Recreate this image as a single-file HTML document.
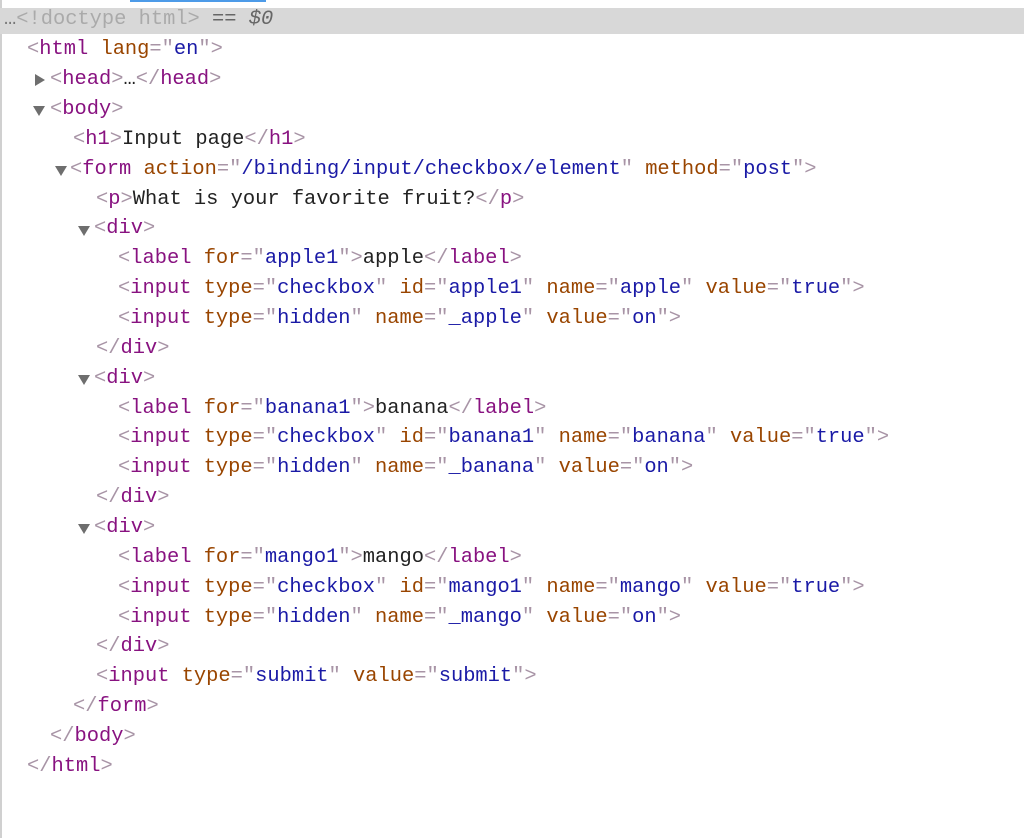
<!DOCTYPE html>
<html><head><style>
body{margin:0;width:1024px;height:838px;background:#fff;position:relative;overflow:hidden;font-family:"Liberation Mono",monospace;font-size:20.4px}
.l{position:absolute;white-space:pre;line-height:30px;height:30px;color:#222}
.t{color:#881280}.b{color:#a894a6}.a{color:#994500}.v{color:#1a1aa6}
.d,.r{position:absolute;width:0;height:0}
.d{border-left:6px solid transparent;border-right:6px solid transparent;border-top:10px solid #6e6e6e}
.r{border-top:6px solid transparent;border-bottom:6px solid transparent;border-left:10px solid #6e6e6e}
</style></head><body>
<div style="position:absolute;left:0;top:0;width:2px;height:838px;background:#d0d0d0"></div>
<div style="position:absolute;left:130px;top:0;width:136px;height:2px;background:#4d9be8"></div>
<div style="position:absolute;left:0;top:8px;width:1024px;height:26px;background:#d8d8d8"></div>
<div class="l" style="left:4px;top:5px"><span style="color:#777">…</span><span style="color:#aaa">&lt;!doctype html&gt;</span><span style="color:#666"> == <i>$0</i></span></div>

<div class="l" style="left:27px;top:35px"><span class="b">&lt;</span><span class="t">html</span> <span class="a">lang</span><span class="b">="</span><span class="v">en</span><span class="b">"&gt;</span></div>
<div class="r" style="left:35px;top:74px"></div>
<div class="l" style="left:50px;top:65px"><span class="b">&lt;</span><span class="t">head</span><span class="b">&gt;</span>…<span class="b">&lt;/</span><span class="t">head</span><span class="b">&gt;</span></div>
<div class="d" style="left:33px;top:106px"></div>
<div class="l" style="left:50px;top:95px"><span class="b">&lt;</span><span class="t">body</span><span class="b">&gt;</span></div>
<div class="l" style="left:73px;top:125px"><span class="b">&lt;</span><span class="t">h1</span><span class="b">&gt;</span>Input page<span class="b">&lt;/</span><span class="t">h1</span><span class="b">&gt;</span></div>
<div class="d" style="left:55px;top:166px"></div>
<div class="l" style="left:70px;top:155px"><span class="b">&lt;</span><span class="t">form</span> <span class="a">action</span><span class="b">="</span><span class="v">/binding/input/checkbox/element</span><span class="b">"</span> <span class="a">method</span><span class="b">="</span><span class="v">post</span><span class="b">"&gt;</span></div>
<div class="l" style="left:96px;top:185px"><span class="b">&lt;</span><span class="t">p</span><span class="b">&gt;</span>What is your favorite fruit?<span class="b">&lt;/</span><span class="t">p</span><span class="b">&gt;</span></div>

<div class="d" style="left:78px;top:226px"></div>
<div class="l" style="left:94px;top:214px"><span class="b">&lt;</span><span class="t">div</span><span class="b">&gt;</span></div>
<div class="l" style="left:118px;top:244px"><span class="b">&lt;</span><span class="t">label</span> <span class="a">for</span><span class="b">="</span><span class="v">apple1</span><span class="b">"&gt;</span>apple<span class="b">&lt;/</span><span class="t">label</span><span class="b">&gt;</span></div>
<div class="l" style="left:118px;top:274px"><span class="b">&lt;</span><span class="t">input</span> <span class="a">type</span><span class="b">="</span><span class="v">checkbox</span><span class="b">"</span> <span class="a">id</span><span class="b">="</span><span class="v">apple1</span><span class="b">"</span> <span class="a">name</span><span class="b">="</span><span class="v">apple</span><span class="b">"</span> <span class="a">value</span><span class="b">="</span><span class="v">true</span><span class="b">"&gt;</span></div>
<div class="l" style="left:118px;top:304px"><span class="b">&lt;</span><span class="t">input</span> <span class="a">type</span><span class="b">="</span><span class="v">hidden</span><span class="b">"</span> <span class="a">name</span><span class="b">="</span><span class="v">_apple</span><span class="b">"</span> <span class="a">value</span><span class="b">="</span><span class="v">on</span><span class="b">"&gt;</span></div>
<div class="l" style="left:96px;top:334px"><span class="b">&lt;/</span><span class="t">div</span><span class="b">&gt;</span></div>

<div class="d" style="left:78px;top:375px"></div>
<div class="l" style="left:94px;top:364px"><span class="b">&lt;</span><span class="t">div</span><span class="b">&gt;</span></div>
<div class="l" style="left:118px;top:394px"><span class="b">&lt;</span><span class="t">label</span> <span class="a">for</span><span class="b">="</span><span class="v">banana1</span><span class="b">"&gt;</span>banana<span class="b">&lt;/</span><span class="t">label</span><span class="b">&gt;</span></div>
<div class="l" style="left:118px;top:423px"><span class="b">&lt;</span><span class="t">input</span> <span class="a">type</span><span class="b">="</span><span class="v">checkbox</span><span class="b">"</span> <span class="a">id</span><span class="b">="</span><span class="v">banana1</span><span class="b">"</span> <span class="a">name</span><span class="b">="</span><span class="v">banana</span><span class="b">"</span> <span class="a">value</span><span class="b">="</span><span class="v">true</span><span class="b">"&gt;</span></div>
<div class="l" style="left:118px;top:453px"><span class="b">&lt;</span><span class="t">input</span> <span class="a">type</span><span class="b">="</span><span class="v">hidden</span><span class="b">"</span> <span class="a">name</span><span class="b">="</span><span class="v">_banana</span><span class="b">"</span> <span class="a">value</span><span class="b">="</span><span class="v">on</span><span class="b">"&gt;</span></div>
<div class="l" style="left:96px;top:483px"><span class="b">&lt;/</span><span class="t">div</span><span class="b">&gt;</span></div>

<div class="d" style="left:78px;top:524px"></div>
<div class="l" style="left:94px;top:513px"><span class="b">&lt;</span><span class="t">div</span><span class="b">&gt;</span></div>
<div class="l" style="left:118px;top:543px"><span class="b">&lt;</span><span class="t">label</span> <span class="a">for</span><span class="b">="</span><span class="v">mango1</span><span class="b">"&gt;</span>mango<span class="b">&lt;/</span><span class="t">label</span><span class="b">&gt;</span></div>
<div class="l" style="left:118px;top:573px"><span class="b">&lt;</span><span class="t">input</span> <span class="a">type</span><span class="b">="</span><span class="v">checkbox</span><span class="b">"</span> <span class="a">id</span><span class="b">="</span><span class="v">mango1</span><span class="b">"</span> <span class="a">name</span><span class="b">="</span><span class="v">mango</span><span class="b">"</span> <span class="a">value</span><span class="b">="</span><span class="v">true</span><span class="b">"&gt;</span></div>
<div class="l" style="left:118px;top:603px"><span class="b">&lt;</span><span class="t">input</span> <span class="a">type</span><span class="b">="</span><span class="v">hidden</span><span class="b">"</span> <span class="a">name</span><span class="b">="</span><span class="v">_mango</span><span class="b">"</span> <span class="a">value</span><span class="b">="</span><span class="v">on</span><span class="b">"&gt;</span></div>
<div class="l" style="left:96px;top:632px"><span class="b">&lt;/</span><span class="t">div</span><span class="b">&gt;</span></div>
<div class="l" style="left:96px;top:662px"><span class="b">&lt;</span><span class="t">input</span> <span class="a">type</span><span class="b">="</span><span class="v">submit</span><span class="b">"</span> <span class="a">value</span><span class="b">="</span><span class="v">submit</span><span class="b">"&gt;</span></div>
<div class="l" style="left:73px;top:692px"><span class="b">&lt;/</span><span class="t">form</span><span class="b">&gt;</span></div>
<div class="l" style="left:50px;top:722px"><span class="b">&lt;/</span><span class="t">body</span><span class="b">&gt;</span></div>
<div class="l" style="left:27px;top:752px"><span class="b">&lt;/</span><span class="t">html</span><span class="b">&gt;</span></div>
</body></html>
